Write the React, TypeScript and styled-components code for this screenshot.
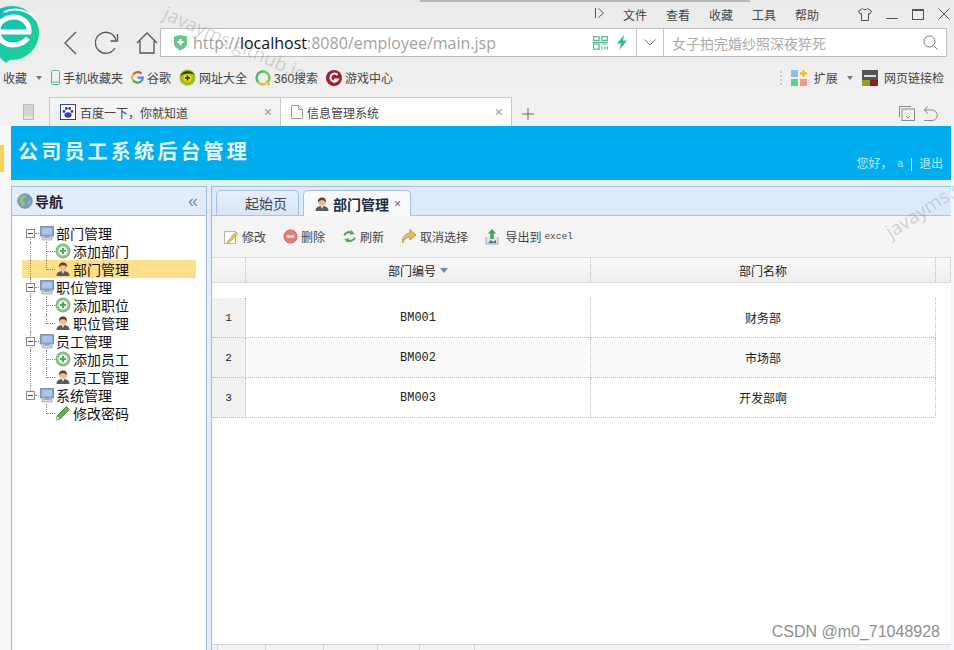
import React from "react";
import styled, { createGlobalStyle } from "styled-components";

const cjk = `"Noto Sans CJK SC", sans-serif`;

const Global = createGlobalStyle`
  html, body { margin: 0; padding: 0; background: #fff; }
  body { font-family: "Liberation Sans", ${cjk}; font-size: 12px; color: #333; }
  * { box-sizing: border-box; }
`;

const Page = styled.div`
  width: 954px;
  height: 650px;
  position: relative;
  overflow: hidden;
  display: flex;
  flex-direction: column;
  background: #fff;
`;

/* browser chrome */
const Chrome = styled.div`
  height: 126px;
  flex: none;
  display: flex;
  flex-direction: column;
  background: linear-gradient(#ebebeb, #efefef 60%, #f1f1f1);
`;
const TopShadow = styled.div`
  position: absolute;
  left: 420px;
  top: 0;
  width: 330px;
  height: 2px;
  background: #b8b8b8;
`;
const MenuRow = styled.div`
  height: 28px;
  display: flex;
  align-items: center;
  justify-content: flex-end;
  padding: 0 4px 0 0;
  color: #444;
`;
const MenuItem = styled.span`
  width: 43px;
  font-size: 12px;
  text-align: left;
`;
const WinButtons = styled.div`
  display: flex;
  align-items: center;
  gap: 14px;
  margin-left: 20px;
`;
const AddressRow = styled.div`
  height: 29px;
  display: flex;
  align-items: center;
  padding-right: 7px;
`;
const NavIcons = styled.div`
  width: 160px;
  height: 100%;
  flex: none;
  display: flex;
  align-items: center;
  padding-left: 62px;
  gap: 17px;
`;
const AddressBox = styled.div`
  flex: 1;
  height: 29px;
  display: flex;
  align-items: center;
  background: #fff;
  border: 1px solid #bdbdbd;
`;
const UrlCell = styled.div`
  width: 476px;
  height: 100%;
  display: flex;
  align-items: center;
  padding: 0 8px 0 12px;
  border-right: 1px solid #c4c4c4;
`;
const Url = styled.span`
  flex: 1;
  margin-left: 5px;
  font-family: "Open Sans", sans-serif;
  font-size: 16px;
  white-space: nowrap;
  color: #a2a2a2;
  b { font-weight: 400; color: #111; }
`;
const DropCell = styled.div`
  width: 27px;
  height: 100%;
  display: flex;
  align-items: center;
  justify-content: center;
  border-right: 1px solid #c4c4c4;
`;
const SearchCell = styled.div`
  flex: 1;
  display: flex;
  align-items: center;
  justify-content: space-between;
  padding: 0 8px;
  font-size: 14px;
  color: #aaa;
`;
const BookmarkRow = styled.div`
  height: 25px;
  margin-top: 8px;
  display: flex;
  align-items: center;
  justify-content: space-between;
  padding: 0 10px 0 3px;
`;
const BookmarkGroup = styled.div`
  display: flex;
  align-items: center;
`;
const Bookmark = styled.span<{ $gap?: number }>`
  display: flex;
  align-items: center;
  gap: 3px;
  margin-right: ${(p) => p.$gap ?? 8}px;
  font-size: 12px;
  color: #444;
  white-space: nowrap;
`;
const Caret = styled.span`
  width: 0;
  height: 0;
  margin: 0 9px;
  border-left: 3.5px solid transparent;
  border-right: 3.5px solid transparent;
  border-top: 4px solid #777;
`;
const DotsV = styled.span`
  width: 2px;
  height: 14px;
  margin-right: 9px;
  border-left: 2px dotted #d8c9b8;
`;
const TabRow = styled.div`
  height: 29px;
  margin-top: 7px;
  display: flex;
  align-items: flex-end;
  padding-right: 16px;
`;
const PhoneCell = styled.div`
  width: 49px;
  height: 28px;
  display: flex;
  align-items: center;
  justify-content: center;
  padding-left: 18px;
  padding-right: 10px;
`;
const BrowserTab = styled.div<{ $active?: boolean }>`
  width: 232px;
  height: 29px;
  margin-right: -1px;
  display: flex;
  align-items: center;
  gap: 4px;
  padding: 0 8px 0 10px;
  font-size: 12px;
  color: #444;
  background: ${(p) => (p.$active ? "#fff" : "linear-gradient(#f5f5f5,#eeeeee)")};
  border: 1px solid #c8c8c8;
  border-bottom: none;
`;
const TabTitle = styled.span`
  flex: 1;
`;
const TabClose = styled.span`
  font-size: 14px;
  line-height: 1;
  color: #999;
`;
const PlusTab = styled.span`
  margin-left: 11px;
  margin-bottom: 5px;
  flex: 1;
  display: flex;
  justify-content: space-between;
  align-items: center;
`;
const TabTools = styled.span`
  display: flex;
  gap: 8px;
`;
const Logo = styled.svg`
  position: absolute;
  left: -16px;
  top: 6px;
`;
const Mark = styled.span<{ $x: number; $y: number; $r: number; $o?: number }>`
  position: absolute;
  left: ${(p) => p.$x}px;
  top: ${(p) => p.$y}px;
  transform: rotate(${(p) => p.$r}deg);
  transform-origin: left top;
  font-family: "Open Sans", sans-serif;
  font-size: 19px;
  white-space: nowrap;
  color: rgba(120, 120, 120, ${(p) => p.$o ?? 0.3});
  pointer-events: none;
`;

/* blue banner */
const AppArea = styled.div`
  flex: 1;
  min-height: 0;
  display: flex;
  flex-direction: column;
  padding: 0 3px 0 11px;
  background: #f6f7f6;
`;
const Banner = styled.header`
  height: 54px;
  flex: none;
  display: flex;
  justify-content: space-between;
  padding: 13px 8px 0 7px;
  background: #00aeef;
  box-shadow: 0 0 0 0 #000;
`;
const SideFlag = styled.span`
  position: absolute;
  left: 0;
  top: 145px;
  width: 4px;
  height: 27px;
  background: #f9d24f;
`;
const BannerTitle = styled.h1`
  margin: 0;
  font-family: "Liberation Serif", ${cjk};
  font-size: 20px;
  line-height: 26px;
  font-weight: 700;
  letter-spacing: 3.2px;
  color: #e4f6f5;
`;
const Greeting = styled.div`
  align-self: flex-end;
  margin-bottom: 8px;
  display: flex;
  align-items: center;
  gap: 5px;
  font-size: 12px;
  line-height: 16px;
  color: #bfeaf5;
`;
const GreetSep = styled.span`
  margin: 0 2px 0 3px;
  width: 1px;
  height: 13px;
  background: #cfeff8;
`;
const GreetUser = styled.span`
  font-size: 10px;
`;
const Strip = styled.div`
  height: 6px;
  flex: none;
  background: #e2f2f1;
`;
const Workspace = styled.div`
  flex: 1;
  min-height: 0;
  display: flex;
  gap: 4px;
  background: #e2edf9;
`;

/* left nav */
const Side = styled.aside`
  width: 196px;
  flex: none;
  display: flex;
  flex-direction: column;
  background: #fff;
  border: 1px solid #a3bbdc;
  border-bottom: none;
`;
const SideHead = styled.div`
  height: 29px;
  flex: none;
  display: flex;
  align-items: center;
  gap: 2px;
  padding: 0 8px 0 5px;
  background: #e2edfb;
  border-bottom: 1px solid #a3bbdc;
  font-size: 14px;
  font-weight: 700;
  color: #223;
`;
const SideTitle = styled.span`
  flex: 1;
`;
const Collapse = styled.span`
  font-size: 18px;
  line-height: 20px;
  font-weight: 400;
  color: #5d93c9;
`;
const Tree = styled.div`
  padding: 8px 10px 0 10px;
  display: flex;
  flex-direction: column;
  font-size: 14px;
  color: #111;
`;
const TreeRow = styled.div<{ $selected?: boolean }>`
  height: 18px;
  display: flex;
  align-items: center;
  padding-left: 4px;
  white-space: nowrap;
  background: ${(p) => (p.$selected ? "#fddf8c" : "transparent")};
`;
const ToggleCell = styled.span<{ $first?: boolean; $last?: boolean }>`
  width: 9px;
  height: 18px;
  flex: none;
  position: relative;
  display: flex;
  align-items: center;
  &::before {
    content: "";
    position: absolute;
    left: 4px;
    top: ${(p) => (p.$first ? "50%" : "0")};
    bottom: ${(p) => (p.$last ? "50%" : "0")};
    border-left: 1px dotted #888;
  }
`;
const ToggleBox = styled.span`
  position: relative;
  width: 9px;
  height: 9px;
  background: #fff;
  border: 1px solid #8a8a8a;
  &::after {
    content: "";
    position: absolute;
    left: 1px;
    right: 1px;
    top: 3px;
    height: 1px;
    background: #444;
  }
`;
const Stub = styled.span`
  width: 4px;
  flex: none;
  border-top: 1px dotted #888;
  margin-right: 0;
`;
const Spine = styled.span<{ $hide?: boolean }>`
  width: 16px;
  height: 18px;
  flex: none;
  margin-left: 4px;
  border-left: 1px dotted ${(p) => (p.$hide ? "transparent" : "#888")};
`;
const Branch = styled.span<{ $last?: boolean }>`
  width: 9px;
  height: ${(p) => (p.$last ? "10px" : "18px")};
  flex: none;
  align-self: flex-start;
  position: relative;
  border-left: 1px dotted #888;
  &::after {
    content: "";
    position: absolute;
    left: 0;
    right: 0;
    top: 9px;
    border-top: 1px dotted #888;
  }
`;
const RootLabel = styled.span`
  margin-left: 1px;
`;
const LeafLabel = styled.span`
  margin-left: 2px;
`;

/* right panel */
const Panel = styled.main`
  flex: 1;
  min-width: 0;
  display: flex;
  flex-direction: column;
  background: #fff;
  border-left: 1px solid #a3bbdc;
`;
const TabStrip = styled.div`
  height: 30px;
  flex: none;
  display: flex;
  align-items: flex-end;
  gap: 4px;
  padding-left: 4px;
  background: #dcebfc;
  border-top: 1px solid #a9bcdf;
  border-bottom: 1px solid #b0bfdc;
`;
const PanelTab = styled.div<{ $active?: boolean; $w: number }>`
  width: ${(p) => p.$w}px;
  height: 26px;
  margin-bottom: -1px;
  display: flex;
  align-items: center;
  gap: 3px;
  padding: 0 0 0 ${(p) => (p.$active ? 10 : 28)}px;
  border: 1px solid #a9c0dd;
  border-bottom: ${(p) => (p.$active ? "none" : "1px solid #b0bfdc")};
  border-radius: 5px 5px 0 0;
  background: ${(p) => (p.$active ? "#f8f9fb" : "linear-gradient(#e7f0fb,#d7e5f5)")};
  font-size: 14px;
  font-weight: ${(p) => (p.$active ? 700 : 400)};
  color: ${(p) => (p.$active ? "#1f2d3d" : "#444")};
`;
const PanelClose = styled.span`
  margin-left: 2px;
  font-size: 12px;
  font-weight: 400;
  color: #667;
`;
const Toolbar = styled.div`
  height: 42px;
  flex: none;
  display: flex;
  align-items: center;
  padding-left: 11px;
  background: #f4f4f4;
  border-bottom: 1px solid #ddd;
`;
const ToolButton = styled.span<{ $gap: number }>`
  display: flex;
  align-items: center;
  gap: 3px;
  margin-right: ${(p) => p.$gap}px;
  font-size: 12px;
  color: #444;
`;
const Mono = styled.span`
  font-family: "Liberation Mono", monospace;
  font-size: 9.5px;
`;
const Grid = styled.div`
  display: grid;
  grid-template-columns: 34px 345px 345px 15px;
  grid-auto-rows: 40px;
  font-size: 12px;
  color: #222;
`;
const HeadCell = styled.div`
  height: 25px;
  display: flex;
  align-items: center;
  justify-content: center;
  gap: 4px;
  background: linear-gradient(#f8f8f8, #eeeeee);
  border-right: 1px dotted #bbb;
  border-bottom: 1px solid #ddd;
  color: #222;
`;
const SortArrow = styled.span`
  width: 0;
  height: 0;
  border-left: 4px solid transparent;
  border-right: 4px solid transparent;
  border-top: 5px solid #6c8fb0;
`;
const NumCell = styled.div`
  display: flex;
  align-items: center;
  justify-content: center;
  background: #f1f1f1;
  border-right: 1px dotted #bbb;
  border-bottom: 1px dotted #bbb;
  font-family: "Liberation Mono", monospace;
  font-size: 11px;
`;
const Cell = styled.div<{ $alt?: boolean; $mono?: boolean }>`
  display: flex;
  align-items: center;
  justify-content: center;
  background: ${(p) => (p.$alt ? "#fafafa" : "#fff")};
  border-right: 1px dotted #bbb;
  border-bottom: 1px dotted #bbb;
  font-family: ${(p) => (p.$mono ? `"Liberation Mono", monospace` : "inherit")};
`;
const GridSpacer = styled.div`
  flex: 1;
`;
const Pager = styled.div`
  height: 6px;
  flex: none;
  display: flex;
  background: #eff4fb;
  border-top: 1px solid #d9d9d9;
`;
const PagerCell = styled.span<{ $w: number }>`
  width: ${(p) => p.$w}px;
  border-right: 1px solid #c9d3df;
`;
const Credit = styled.span`
  position: absolute;
  right: 14px;
  top: 623px;
  font-family: "Liberation Sans", sans-serif;
  font-size: 16px;
  line-height: 18px;
  color: #8e8e8e;
`;

/* icons */
const Person = () => (
  <svg width="16" height="16" viewBox="0 0 16 16">
    <path d="M1.5 15c0-3.6 2.6-5 6.5-5s6.5 1.400 6.500 5z" fill="#5a5a5a" />
    <path d="M6.500 10l1.500 3 1.500-3z" fill="#e8e0d0" />
    <circle cx="8" cy="6" r="3.800" fill="#e9bd90" />
    <path d="M4 6.500C3.600 2.800 5.800 1.500 8 1.500s4.400 1.300 4 5c-.8-1.600-2.200-2.200-4-2.200S4.800 4.900 4 6.500z" fill="#6b3d1c" />
  </svg>
);
const AddIcon = () => (
  <svg width="16" height="16" viewBox="0 0 16 16">
    <circle cx="8" cy="8" r="7" fill="#8fc98f" stroke="#6fae72" />
    <circle cx="8" cy="8" r="4.600" fill="#fff" opacity=".85" />
    <path d="M8 5v6M5 8h6" stroke="#55a55a" strokeWidth="2" />
  </svg>
);
const Monitor = () => (
  <svg width="16" height="16" viewBox="0 0 16 16">
    <rect x="1.500" y="1.500" width="13" height="9.500" fill="#7fa6d8" stroke="#8a93a3" />
    <rect x="3" y="3" width="10" height="6.500" fill="#a5c6ee" />
    <rect x="5.500" y="11" width="5" height="1.500" fill="#9ba3ad" />
    <rect x="3" y="12.500" width="10" height="2.500" fill="#d5d9df" stroke="#9ba3ad" strokeWidth=".7" />
  </svg>
);
const PencilIcon = () => (
  <svg width="16" height="16" viewBox="0 0 16 16">
    <path d="M2 11L11.500 1.500l3 3L5 14l-3.800.8z" fill="#6fb04a" stroke="#3f7a2c" strokeWidth=".8" />
    <path d="M2 11l3 3-3.800.8z" fill="#e6d9b0" />
  </svg>
);
const EditIcon = () => (
  <svg width="16" height="16" viewBox="0 0 16 16">
    <rect x="1.500" y="2.500" width="11" height="12" fill="#fff" stroke="#b9b9a8" />
    <path d="M5 12l-1 2.500L6.500 13.500 14.500 5l-2-2z" fill="#f2c64a" stroke="#c29a30" strokeWidth=".7" />
  </svg>
);
const DeleteIcon = () => (
  <svg width="15" height="15" viewBox="0 0 16 16">
    <circle cx="8" cy="8" r="7" fill="#e77c70" stroke="#c9685c" />
    <rect x="4" y="6.800" width="8" height="2.400" fill="#fbe8e4" />
  </svg>
);
const RefreshIcon = () => (
  <svg width="15" height="15" viewBox="0 0 16 16" fill="none" stroke="#5fa35a" strokeWidth="2.200">
    <path d="M2.500 7c.6-3 4.800-5 8.500-2.500" />
    <path d="M13.500 9c-.6 3-4.800 5-8.500 2.500" />
    <path d="M10 1.500l3 3.500-4 .8z" fill="#5fa35a" strokeWidth=".6" />
    <path d="M6 14.500l-3-3.500 4-.8z" fill="#5fa35a" strokeWidth=".6" />
  </svg>
);
const UndoIcon = () => (
  <svg width="16" height="17" viewBox="0 0 16 17">
    <path d="M1.500 15C1 9 4.500 5.500 9 5V1.500l6 5.500-6 5V9C6 9 3.500 11 1.500 15z" fill="#eebd5f" stroke="#a9864a" strokeWidth=".8" />
  </svg>
);
const ExportIcon = () => (
  <svg width="14" height="17" viewBox="0 0 14 17">
    <path d="M1 9v7h12V9" fill="#dfe7ee" stroke="#7d93a8" strokeWidth=".8" />
    <path d="M3 15l3-3 2 2 3-2v3z" fill="#456f8f" />
    <path d="M7 1L2.800 5.500h2.400V11h3.600V5.500h2.400z" fill="#4aa35c" />
  </svg>
);
const Globe = () => (
  <svg width="16" height="16" viewBox="0 0 16 16">
    <circle cx="8" cy="8" r="7.300" fill="#6f9fce" stroke="#8d9c8f" />
    <path d="M3 5c2-3 5-3 6-2 0 2-3 2-3 4s2 2 2 4-2 3-3 2c-1-2-3-4-2-8z" fill="#9cc46c" />
    <path d="M11 8l2.500-1c.5 2-.5 4-2 5z" fill="#9cc46c" />
  </svg>
);
const Line = styled.svg`
  flex: none;
`;
const BrowserLogo = () => (
  <Logo width="56" height="58" viewBox="0 0 56 58">
    <defs>
      <linearGradient id="lg" x1="0" y1="0" x2="1" y2="1">
        <stop offset="0" stopColor="#14b7c8" />
        <stop offset="1" stopColor="#1fd38f" />
      </linearGradient>
    </defs>
    <circle cx="28" cy="27" r="27" fill="url(#lg)" />
    <path d="M16 52l6 5 5-4z" fill="#1fc8a6" />
    <path d="M14 24c0-8 8-13 16-13s16 6 15 15H14" fill="none" stroke="#fff" strokeWidth="5" />
    <path d="M14 25c0 9 7 14 15 14 6 0 11-2 15-7" fill="none" stroke="#fff" strokeWidth="5" />
    <path d="M20 6C30 1 46 4 52 14" fill="none" stroke="#fff" strokeWidth="2" />
  </Logo>
);
const BackIcon = () => (
  <Line width="16" height="26" viewBox="0 0 16 26" fill="none" stroke="#555" strokeWidth="1.300">
    <path d="M14 2L3 13l11 11" />
  </Line>
);
const ReloadIcon = () => (
  <Line width="24" height="24" viewBox="0 0 24 24" fill="none" stroke="#555" strokeWidth="1.300">
    <path d="M20 17a10.500 10.500 0 1 1 1-8" />
    <path d="M22.500 3v7h-7" />
  </Line>
);
const HomeIcon = () => (
  <Line width="22" height="22" viewBox="0 0 22 22" fill="none" stroke="#555" strokeWidth="1.300">
    <path d="M1 11L11 1l10 10M4 9v12h14V9" />
  </Line>
);
const ShieldIcon = () => (
  <Line width="15" height="17" viewBox="0 0 15 17">
    <path d="M1 2.500L7.500 1 14 2.500V9c0 4-3.500 6-6.500 7.500C4.500 15 1 13 1 9z" fill="#66c78d" />
    <path d="M7.500 5v6M4.500 8h6" stroke="#fff" strokeWidth="2" />
  </Line>
);
const QrIcon = () => (
  <Line width="15" height="14" viewBox="0 0 15 14" fill="none" stroke="#52b98a" strokeWidth="1.200">
    <rect x=".6" y=".6" width="5.500" height="3.800" />
    <rect x="8.800" y=".6" width="5.500" height="3.800" />
    <rect x=".6" y="8" width="5.500" height="5.200" />
    <path d="M8.800 8h5.500M9 10.500v3M12 10.500v3M14.300 10.500v3M0 6.300h15" />
  </Line>
);
const BoltIcon = () => (
  <Line width="12" height="15" viewBox="0 0 12 15">
    <path d="M8 0L1 8.500h4L3.500 15 11 5.500H7z" fill="#2fbf8a" />
  </Line>
);
const Chevron = () => (
  <Line width="12" height="7" viewBox="0 0 12 7" fill="none" stroke="#777">
    <path d="M.5.500L6 6l5.500-5.500" />
  </Line>
);
const SearchIcon = () => (
  <Line width="15" height="15" viewBox="0 0 15 15" fill="none" stroke="#777">
    <circle cx="6.500" cy="6.500" r="5.500" />
    <path d="M10.500 10.500l4 4" />
  </Line>
);
const ShirtIcon = () => (
  <Line width="14" height="13" viewBox="0 0 14 13" fill="none" stroke="#555">
    <path d="M4.500.500L.5 3l1.500 3 1.500-.5v7h7v-7l1.500.5 1.500-3L9.500.5c-.5 1.500-4.500 1.500-5 0z" />
  </Line>
);
const MinIcon = () => (
  <Line width="12" height="12" viewBox="0 0 12 12" stroke="#555">
    <path d="M0 10.500h12" />
  </Line>
);
const MaxIcon = () => (
  <Line width="12" height="11" viewBox="0 0 12 11" fill="none" stroke="#555">
    <rect x=".5" y=".5" width="11" height="10" />
    <path d="M0 1.500h12" />
  </Line>
);
const CloseIcon = () => (
  <Line width="12" height="12" viewBox="0 0 12 12" stroke="#555">
    <path d="M.5.500l11 11M11.500.5l-11 11" />
  </Line>
);
const PlayIcon = () => (
  <Line width="9" height="10" viewBox="0 0 9 10" fill="none" stroke="#555">
    <path d="M.5 0v10M3.500.5L8.500 5l-5 4.500" />
  </Line>
);
const PhoneMark = ({ tone }: { tone: string }) => (
  <Line width="9" height="15" viewBox="0 0 9 15" fill="none" stroke={tone}>
    <rect x=".5" y=".5" width="8" height="14" rx="1" />
    <path d="M.5 12h8" />
  </Line>
);
const PhoneTab = () => (
  <Line width="11" height="16" viewBox="0 0 11 16">
    <rect x=".5" y=".5" width="10" height="15" fill="#d3d3d3" stroke="#bbb" />
    <rect x="1.500" y="12.500" width="8" height="2" fill="#eee" />
  </Line>
);
const GoogleIcon = () => (
  <Line width="13" height="13" viewBox="0 0 13 13" fill="none" strokeWidth="2.200">
    <path d="M10.500 2.700A5.300 5.300 0 0 0 2.200 3.500" stroke="#e2513f" />
    <path d="M2.200 3.500a5.300 5.300 0 0 0 0 6" stroke="#efb92e" />
    <path d="M2.200 9.500a5.300 5.300 0 0 0 8 .7" stroke="#3ea45a" />
    <path d="M6.500 6.700h5.300c0 1.500-.6 2.600-1.600 3.500" stroke="#4a83e6" />
  </Line>
);
const SiteIcon = () => (
  <Line width="17" height="17" viewBox="0 0 17 17">
    <circle cx="8.500" cy="8.500" r="8" fill="#9fbf1d" />
    <path d="M1 7c3-6 11-7 15-1-4-2-10-2-15 1z" fill="#33421a" />
    <circle cx="8.500" cy="9" r="4" fill="#f1d520" />
    <path d="M8.500 6.500v5M6 9h5" stroke="#222" strokeWidth="1.600" />
  </Line>
);
const So360Icon = () => (
  <Line width="16" height="16" viewBox="0 0 16 16" fill="none" strokeWidth="2.400">
    <path d="M8 1.500a6.500 6.500 0 0 0-5 10.500" stroke="#49b96a" />
    <path d="M8 1.500a6.500 6.500 0 0 1 5 10.500" stroke="#79c65a" />
    <path d="M3 12a6.500 6.500 0 0 0 8 1.500" stroke="#efb92e" />
    <path d="M11 11l3.500 4" stroke="#efb92e" />
  </Line>
);
const GameIcon = () => (
  <Line width="16" height="16" viewBox="0 0 16 16">
    <circle cx="8" cy="8" r="8" fill="#a51c30" />
    <path d="M11.500 5A4 4 0 1 0 12 9.500H8" fill="none" stroke="#fff" strokeWidth="2" />
  </Line>
);
const ExtIcon = () => (
  <Line width="16" height="16" viewBox="0 0 16 16">
    <rect x="0" y="0" width="7" height="7" fill="#7fc4ee" />
    <rect x="0" y="9" width="7" height="7" fill="#59d08e" />
    <rect x="9" y="9" width="7" height="7" fill="#f29a86" />
    <path d="M12.500 0v7M9 3.500h7" stroke="#f0b93a" strokeWidth="2.400" />
  </Line>
);
const LinkCheckIcon = () => (
  <Line width="16" height="16" viewBox="0 0 16 16">
    <rect width="16" height="16" fill="#555" />
    <rect y="10" width="8" height="6" fill="#8da31d" />
    <rect x="8" y="10" width="8" height="6" fill="#8a1f1f" />
    <rect x="2" y="5" width="12" height="2" fill="#ddd" />
  </Line>
);
const PawIcon = () => (
  <Line width="16" height="16" viewBox="0 0 16 16">
    <rect x=".5" y=".5" width="15" height="15" fill="#fff" stroke="#2f3fae" />
    <g fill="#2f3fae">
      <ellipse cx="8" cy="11" rx="3.600" ry="2.800" />
      <circle cx="4" cy="7.500" r="1.400" />
      <circle cx="12" cy="7.500" r="1.400" />
      <circle cx="6.300" cy="4.500" r="1.400" />
      <circle cx="9.700" cy="4.500" r="1.400" />
    </g>
  </Line>
);
const DocIcon = () => (
  <Line width="12" height="14" viewBox="0 0 12 14" fill="none" stroke="#999">
    <path d="M.5.500h7l4 4v9H.5zM7.500.5v4h4" />
  </Line>
);
const PlusIcon = () => (
  <Line width="12" height="12" viewBox="0 0 12 12" stroke="#666">
    <path d="M6 0v12M0 6h12" />
  </Line>
);
const WindowsIcon = () => (
  <Line width="16" height="15" viewBox="0 0 16 15" fill="none" stroke="#888">
    <rect x="3" y="3" width="12.500" height="11.500" />
    <path d="M.5 11V.5H12" />
    <path d="M7 10l2 2 2-2" />
  </Line>
);
const RestoreIcon = () => (
  <Line width="15" height="15" viewBox="0 0 15 15" fill="none" stroke="#888">
    <path d="M5 .5L1 4l4 3.500M1 4h8a5 5 0 0 1 0 10.500H1" />
  </Line>
);

const menuItems = ["文件", "查看", "收藏", "工具", "帮助"];
const treeData = [
  { root: "部门管理", leaves: [["add", "添加部门"], ["user", "部门管理"]] },
  { root: "职位管理", leaves: [["add", "添加职位"], ["user", "职位管理"]] },
  { root: "员工管理", leaves: [["add", "添加员工"], ["user", "员工管理"]] },
  { root: "系统管理", leaves: [["pencil", "修改密码"]] },
];
const rows = [
  { no: 1, code: "BM001", name: "财务部" },
  { no: 2, code: "BM002", name: "市场部" },
  { no: 3, code: "BM003", name: "开发部啊" },
];
const leafIcon = (kind: string) =>
  kind === "add" ? <AddIcon /> : kind === "user" ? <Person /> : <PencilIcon />;

export default function App() {
  return (
    <Page>
      <Global />
      <Chrome>
        <MenuRow>
          <MenuItem as="span" style={{ width: 28 }}>
            <PlayIcon />
          </MenuItem>
          {menuItems.map((m) => (
            <MenuItem key={m}>{m}</MenuItem>
          ))}
          <WinButtons>
            <ShirtIcon />
            <MinIcon />
            <MaxIcon />
            <CloseIcon />
          </WinButtons>
        </MenuRow>
        <AddressRow>
          <NavIcons>
            <BackIcon />
            <ReloadIcon />
            <HomeIcon />
          </NavIcons>
          <AddressBox>
            <UrlCell>
              <ShieldIcon />
              <Url>
                http://<b>localhost</b>:8080/employee/main.jsp
              </Url>
              <QrIcon />
              <span style={{ width: 8 }} />
              <BoltIcon />
            </UrlCell>
            <DropCell>
              <Chevron />
            </DropCell>
            <SearchCell>
              女子拍完婚纱照深夜猝死
              <SearchIcon />
            </SearchCell>
          </AddressBox>
        </AddressRow>
        <BookmarkRow>
          <BookmarkGroup>
            <Bookmark $gap={0}>收藏</Bookmark>
            <Caret />
            <Bookmark>
              <PhoneMark tone="#58b98c" />
              手机收藏夹
            </Bookmark>
            <Bookmark>
              <GoogleIcon />
              谷歌
            </Bookmark>
            <Bookmark>
              <SiteIcon />
              网址大全
            </Bookmark>
            <Bookmark>
              <So360Icon />
              360搜索
            </Bookmark>
            <Bookmark>
              <GameIcon />
              游戏中心
            </Bookmark>
          </BookmarkGroup>
          <BookmarkGroup>
            <DotsV />
            <Bookmark $gap={0}>
              <ExtIcon />
              &nbsp;扩展
            </Bookmark>
            <Caret />
            <Bookmark $gap={0}>
              <LinkCheckIcon />
              &nbsp;网页链接检
            </Bookmark>
          </BookmarkGroup>
        </BookmarkRow>
        <TabRow>
          <PhoneCell>
            <PhoneTab />
          </PhoneCell>
          <BrowserTab>
            <PawIcon />
            <TabTitle>百度一下，你就知道</TabTitle>
            <TabClose>×</TabClose>
          </BrowserTab>
          <BrowserTab $active>
            <DocIcon />
            <TabTitle>信息管理系统</TabTitle>
            <TabClose>×</TabClose>
          </BrowserTab>
          <PlusTab>
            <PlusIcon />
            <TabTools>
              <WindowsIcon />
              <RestoreIcon />
            </TabTools>
          </PlusTab>
        </TabRow>
      </Chrome>
      <AppArea>
        <Banner>
          <BannerTitle>公司员工系统后台管理</BannerTitle>
          <Greeting>
            您好，<GreetUser>a</GreetUser>
            <GreetSep />
            退出
          </Greeting>
        </Banner>
        <Strip />
        <Workspace>
          <Side>
            <SideHead>
              <Globe />
              <SideTitle>导航</SideTitle>
              <Collapse>«</Collapse>
            </SideHead>
            <Tree>
              {treeData.map((group, gi) => {
                const lastGroup = gi === treeData.length - 1;
                return (
                  <React.Fragment key={group.root}>
                    <TreeRow>
                      <ToggleCell $first={gi === 0} $last={lastGroup}>
                        <ToggleBox />
                      </ToggleCell>
                      <Stub />
                      <Monitor />
                      <RootLabel>{group.root}</RootLabel>
                    </TreeRow>
                    {group.leaves.map(([kind, label], li) => (
                      <TreeRow key={label + li} $selected={gi === 0 && li === 1}>
                        <Spine $hide={lastGroup} />
                        <Branch $last={li === group.leaves.length - 1} />
                        {leafIcon(kind)}
                        <LeafLabel>{label}</LeafLabel>
                      </TreeRow>
                    ))}
                  </React.Fragment>
                );
              })}
            </Tree>
          </Side>
          <Panel>
            <TabStrip>
              <PanelTab $w={83}>起始页</PanelTab>
              <PanelTab $w={108} $active>
                <Person />
                部门管理
                <PanelClose>×</PanelClose>
              </PanelTab>
            </TabStrip>
            <Toolbar>
              <ToolButton $gap={17}>
                <EditIcon />
                修改
              </ToolButton>
              <ToolButton $gap={17}>
                <DeleteIcon />
                删除
              </ToolButton>
              <ToolButton $gap={17}>
                <RefreshIcon />
                刷新
              </ToolButton>
              <ToolButton $gap={17}>
                <UndoIcon />
                取消选择
              </ToolButton>
              <ToolButton $gap={0}>
                <ExportIcon />
                &nbsp;导出到<Mono>excel</Mono>
              </ToolButton>
            </Toolbar>
            <Grid>
              <HeadCell />
              <HeadCell>
                部门编号
                <SortArrow />
              </HeadCell>
              <HeadCell>部门名称</HeadCell>
              <HeadCell />
              {rows.map((r, i) => (
                <React.Fragment key={r.no}>
                  <NumCell>{r.no}</NumCell>
                  <Cell $mono $alt={i === 1}>
                    {r.code}
                  </Cell>
                  <Cell $alt={i === 1}>{r.name}</Cell>
                  <span />
                </React.Fragment>
              ))}
            </Grid>
            <GridSpacer />
            <Pager>
              {[6, 48, 58, 54, 42, 55].map((w, i) => (
                <PagerCell key={i} $w={w} />
              ))}
            </Pager>
          </Panel>
        </Workspace>
      </AppArea>
      <TopShadow />
      <BrowserLogo />
      <SideFlag />
      <Mark $x={170} $y={0} $r={24}>
        javayms.github.io
      </Mark>
      <Mark $x={880} $y={222} $r={-33}>
        javayms.github.io
      </Mark>
      <Credit>CSDN @m0_71048928</Credit>
    </Page>
  );
}
